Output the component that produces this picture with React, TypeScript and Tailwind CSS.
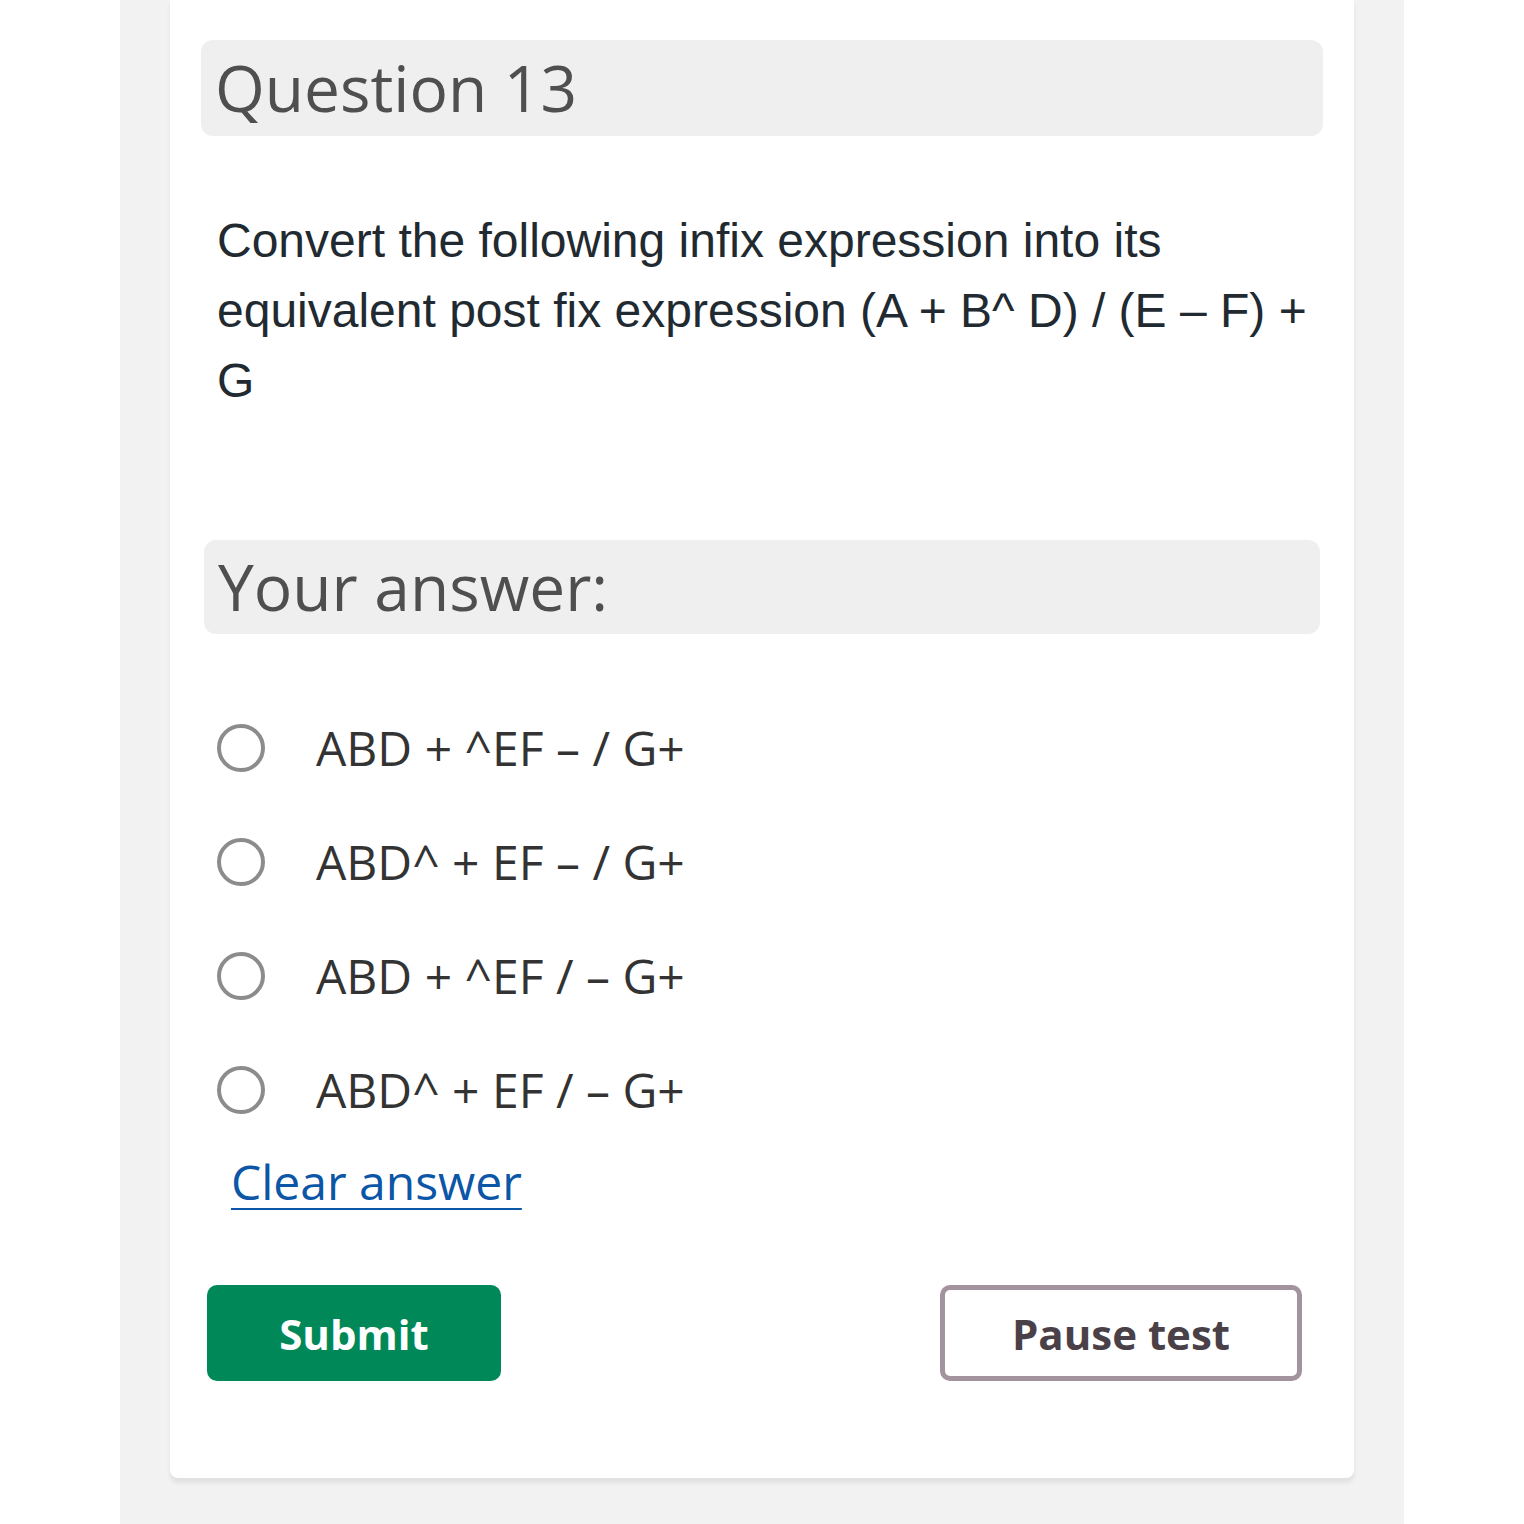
const options = [
  "ABD + ^EF – / G+",
  "ABD^ + EF – / G+",
  "ABD + ^EF / – G+",
  "ABD^ + EF / – G+",
];

export default function App() {
  return (
    <div className="min-h-[1524px] w-full bg-white">
      <div className="mx-[120px] min-h-[1524px] bg-[#f2f2f2] px-[50px]">
        {/* Question card */}
        <div className="rounded-b-lg bg-white px-[31px] pt-10 pb-[97px] shadow-[0_5px_4px_rgba(0,0,0,0.07)]">
          <div className="flex h-[96px] items-center rounded-xl bg-[#efefef] pl-[14px] pr-4">
            <h2 className="text-[64px] leading-none text-[#4f4f4f]" style={{ fontFamily: "'Open Sans', sans-serif" }}>
              Question 13
            </h2>
          </div>

          <p
            className="mt-[70px] pl-4 pr-2 text-[48px] leading-[70px] text-[#222a31]"
            style={{ fontFamily: "'Liberation Sans', Arial, sans-serif" }}
          >
            Convert the following infix expression into its equivalent post fix expression (A + B^ D) / (E – F) + G
          </p>

          <div className="mx-[3px] mt-[124px] flex h-[94px] items-center rounded-xl bg-[#efefef] pl-[14px] pr-4">
            <h3 className="text-[64px] leading-none text-[#4f4f4f]" style={{ fontFamily: "'Open Sans', sans-serif" }}>
              Your answer:
            </h3>
          </div>

          <div className="mt-[57px] flex flex-col" style={{ fontFamily: "'Open Sans', sans-serif" }}>
            {options.map((opt) => (
              <label key={opt} className="flex h-[114px] items-center pl-4">
                <span className="h-12 w-12 shrink-0 rounded-full border-[4px] border-[#8c8c8c] bg-white" />
                <span className="ml-[51px] text-[48px] text-[#333333]">{opt}</span>
              </label>
            ))}
          </div>

          <a
            href="#"
            className="ml-[30px] mt-0 inline-block text-[48px] leading-[70px] text-[#0b56a6] underline decoration-2 underline-offset-[8px]"
            style={{ fontFamily: "'Open Sans', sans-serif" }}
          >
            Clear answer
          </a>

          <div className="mt-[68px] flex items-center justify-between pl-[6px] pr-[21px]" style={{ fontFamily: "'Open Sans', sans-serif" }}>
            <button className="h-[96px] w-[294px] rounded-[10px] bg-[#008858] text-[42px] font-bold text-white">
              Submit
            </button>
            <button className="h-[96px] w-[362px] rounded-[10px] border-[5px] border-[#a3939e] bg-white text-[42px] font-bold text-[#4a4148]">
              Pause test
            </button>
          </div>
        </div>
      </div>
    </div>
  );
}
